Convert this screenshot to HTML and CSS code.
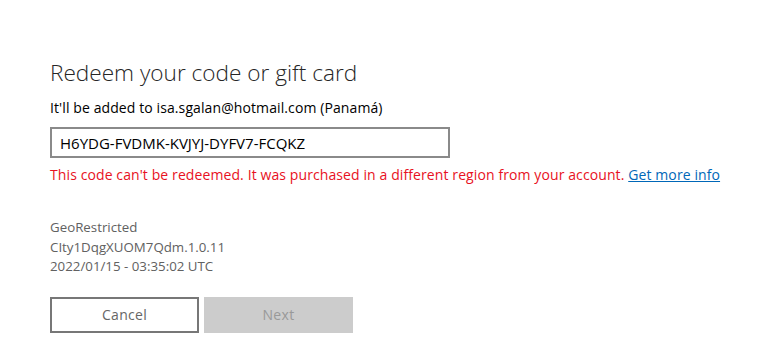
FILE: index.html
```html
<!DOCTYPE html>
<html lang="en">
<head>
    <meta charset="UTF-8">
    <title>Redeem your code or gift card</title>
    <link rel="stylesheet" href="styles.css">
</head>
<body>
    <div class="dialog">
        <h1 class="title">Redeem your code or gift card</h1>
        <p class="account">It'll be added to isa.sgalan@hotmail.com (Panamá)</p>
        <input class="code" type="text" value="H6YDG-FVDMK-KVJYJ-DYFV7-FCQKZ">
        <p class="error">This code can't be redeemed. It was purchased in a different region from your account. <a href="#">Get more info</a></p>

        <div class="details">
            <div>GeoRestricted</div>
            <div>CIty1DqgXUOM7Qdm.1.0.11</div>
            <div>2022/01/15 - 03:35:02 UTC</div>
        </div>

        <div class="actions">
            <button class="btn cancel">Cancel</button>
            <button class="btn next" disabled>Next</button>
        </div>
    </div>
</body>
</html>
```

FILE: styles.css
```css
* {
    box-sizing: border-box;
}

body {
    margin: 0;
    font-family: "Open Sans", "Noto Sans", sans-serif;
    background: #fff;
    color: #000;
}

.dialog {
    padding: 57px 0 0 50px;
}

.title {
    margin: 0;
    font-size: 22.6px;
    font-weight: 300;
    line-height: 32px;
    color: #262626;
}

.account {
    margin: 9px 0 0;
    font-size: 14px;
    letter-spacing: 0.1px;
    line-height: 20px;
}

.code {
    display: block;
    width: 400px;
    height: 31px;
    margin-top: 9px;
    padding: 0 8px;
    border: 2px solid #8a8a8a;
    font-family: inherit;
    font-size: 15px;
    color: #000;
    outline: none;
}

.error {
    margin: 7px 0 0;
    font-size: 14px;
    letter-spacing: 0.1px;
    line-height: 20px;
    color: #e81123;
}

.error a {
    color: #0067b8;
}

.details {
    margin-top: 33px;
    font-size: 13.3px;
    line-height: 19.5px;
    color: #616161;
}

.actions {
    display: flex;
    gap: 5px;
    margin-top: 20px;
}

.btn {
    width: 149px;
    height: 36px;
    font-family: inherit;
    font-size: 14px;
    letter-spacing: 0.3px;
}

.cancel {
    background: #fff;
    border: 2px solid #777;
    color: #666;
}

.next {
    background: #ccc;
    border: none;
    color: #999;
}
```
